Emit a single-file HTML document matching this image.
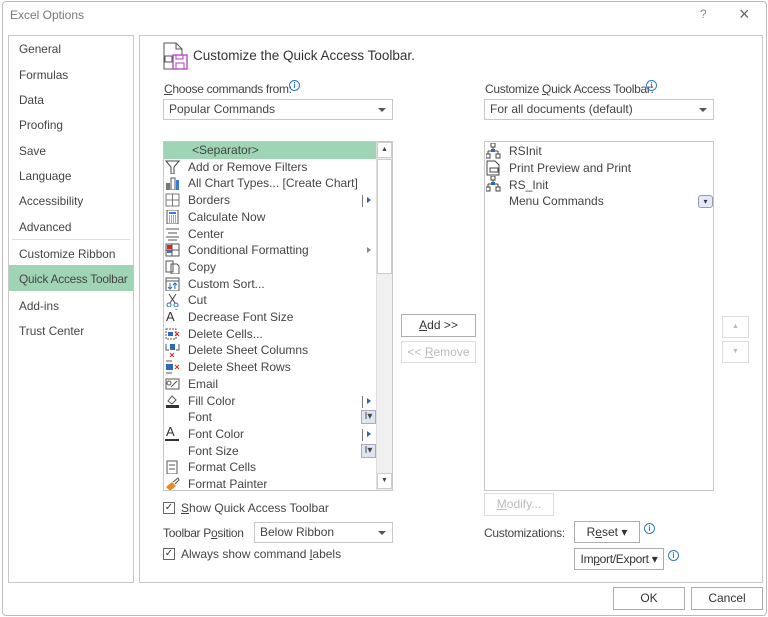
<!DOCTYPE html><html><head><style>
*{box-sizing:border-box;margin:0;padding:0}
body{width:768px;height:617px;background:#fff;font-family:"Liberation Sans",sans-serif;font-size:11.5px;color:#444;position:relative;overflow:hidden;white-space:nowrap}
.a{position:absolute;white-space:nowrap}
.box{position:absolute;border:1px solid #c8c8c8;background:#fff}
.nav div{position:absolute;left:10px;font-size:11.8px;white-space:nowrap}
.row{position:absolute;left:0;height:16.7px;line-height:16.7px;width:212px}
.row span{position:absolute;left:24px}
.ic{position:absolute;left:1px;top:1px;width:15px;height:14px}
.btn{position:absolute;border:1px solid #adadad;background:#fff;text-align:center;font-size:12px}
.dd{position:absolute;border:1px solid #c8c8c8;background:#fff;padding-left:5px;font-size:12px}
.dd:after{content:"";position:absolute;right:6px;top:8px;border-left:4px solid transparent;border-right:4px solid transparent;border-top:4px solid #555}
.cb{position:absolute;width:12px;height:12px;border:1px solid #666;font-size:10px;line-height:10px;text-align:center;color:#333}
.info{position:absolute;width:11px;height:11px;border:1.3px solid #2a78d0;border-radius:50%;color:#2a78d0;font-size:8px;line-height:9px;text-align:center;font-weight:bold}
.lab{letter-spacing:-0.3px}
</style></head><body>
<div class="a" style="left:2px;top:1px;width:765px;height:615px;border:1px solid #bbb;border-radius:4px"></div>
<div class="a" style="left:10px;top:8px;font-size:12px;color:#777">Excel Options</div>
<div class="a" style="left:700px;top:7px;font-size:12px;color:#888">?</div>
<div class="a" style="left:739px;top:4px;font-size:18px;color:#666">×</div>
<div class="box nav" style="left:8px;top:35px;width:126px;height:548px">
<div style="top:6px">General</div><div style="top:32px">Formulas</div><div style="top:57px">Data</div><div style="top:82px">Proofing</div><div style="top:108px">Save</div><div style="top:133px">Language</div><div style="top:158px">Accessibility</div><div style="top:184px">Advanced</div>
<div style="left:3px;top:203px;width:118px;height:1px;background:#ddd"></div>
<div style="top:211px">Customize Ribbon</div>
<div style="left:0;top:229px;width:124px;height:26px;background:#9fd5b5"></div>
<div style="top:236px;letter-spacing:-0.2px">Quick Access Toolbar</div>
<div style="top:263px">Add-ins</div><div style="top:288px">Trust Center</div>
</div>
<div class="box" style="left:139px;top:35px;width:624px;height:548px"></div>
<svg class="a" style="left:163px;top:42px" width="28" height="30"><path d="M1 1h12l6 6v20H1z M13 1v6h6" fill="none" stroke="#555"/><rect x="2" y="14" width="7" height="6" fill="#fff" stroke="#555"/><rect x="10" y="13" width="14" height="14" fill="#fff" stroke="#b040c0" stroke-width="1.3"/><rect x="13" y="13" width="7" height="4" fill="none" stroke="#b040c0"/><rect x="13" y="21" width="8" height="6" fill="none" stroke="#b040c0"/></svg>
<div class="a" style="left:193px;top:48px;font-size:13.5px;color:#333">Customize the Quick Access Toolbar.</div>
<div class="a lab" style="left:164px;top:82px;font-size:12px"><u>C</u>hoose commands from:</div>
<div class="info" style="left:289px;top:80px">i</div>
<div class="dd" style="left:163px;top:99px;width:230px;height:21px;line-height:19px">Popular Commands</div>
<div class="box" style="left:163px;top:141px;width:230px;height:350px;overflow:hidden">
<div style="position:absolute;left:0;top:0;width:212px;height:17px;background:#9fd5b5"></div>
<div style="position:absolute;left:212px;top:0;width:17px;height:348px;background:#f0f0f0;border-left:1px solid #ddd"></div>
<div style="position:absolute;left:213px;top:17px;width:15px;height:115px;background:#fff;border:1px solid #ccc"></div>
<div style="position:absolute;left:213px;top:0;width:15px;height:16px;background:#fff;border:1px solid #ccc;font-size:7px;text-align:center;line-height:14px">▲</div>
<div style="position:absolute;left:213px;top:331px;width:15px;height:16px;background:#fff;border:1px solid #ccc;font-size:7px;text-align:center;line-height:14px">▼</div>
<div style="position:relative;font-size:12px">
<div class="row" style="top:0"><span style="left:28px">&lt;Separator&gt;</span></div>
<div class="row" style="top:16.7px"><svg class="ic"><path d="M1 1h13L9 7v7H6V7z" fill="none" stroke="#444"/></svg><span>Add or Remove Filters</span></div>
<div class="row" style="top:33.4px"><svg class="ic"><rect x="1" y="7" width="4" height="7" fill="#777"/><rect x="6" y="2" width="4" height="12" fill="none" stroke="#555"/><rect x="11" y="4" width="3" height="10" fill="#3a7bd5"/></svg><span>All Chart Types... [Create Chart]</span></div>
<div class="row" style="top:50.1px"><svg class="ic"><rect x="1" y="1" width="13" height="12" fill="none" stroke="#777"/><path d="M7.5 1v12M1 7h13" stroke="#777"/></svg><span>Borders</span><i style="position:absolute;left:198px;top:3px;height:12px;border-left:1px solid #777"></i><i style="position:absolute;left:203px;top:5px;border-left:4px solid #3a5fa0;border-top:3px solid transparent;border-bottom:3px solid transparent"></i></div>
<div class="row" style="top:66.8px"><svg class="ic"><rect x="2" y="0" width="11" height="14" fill="none" stroke="#555"/><rect x="4" y="2" width="7" height="2" fill="#3a7bd5"/><path d="M4 6h7M4 8h7M4 10h7M4 12h7" stroke="#555" stroke-dasharray="1 1"/></svg><span>Calculate Now</span></div>
<div class="row" style="top:83.5px"><svg class="ic"><path d="M1 2h13M3 6h9M1 10h13M3 13h9" stroke="#555"/></svg><span>Center</span></div>
<div class="row" style="top:100.2px"><svg class="ic"><rect x="1" y="1" width="13" height="12" fill="none" stroke="#555"/><rect x="2" y="2" width="5" height="4" fill="#d22"/><rect x="2" y="7" width="5" height="3" fill="#3a7bd5"/><path d="M1 7h13M7 1v12" stroke="#555"/></svg><span>Conditional Formatting</span><i style="position:absolute;left:203px;top:5px;border-left:4px solid #888;border-top:3px solid transparent;border-bottom:3px solid transparent"></i></div>
<div class="row" style="top:116.9px"><svg class="ic"><path d="M1 1h7v11H1zM6 4h6l2 2v8H6z" fill="#fff" stroke="#555"/></svg><span>Copy</span></div>
<div class="row" style="top:133.6px"><svg class="ic"><rect x="1" y="1" width="13" height="13" fill="none" stroke="#555"/><path d="M1 4h13" stroke="#555"/><path d="M5 6v6M3 10l2 2 2-2M10 12V6M8 8l2-2 2 2" stroke="#2a6ac0" fill="none"/></svg><span>Custom Sort...</span></div>
<div class="row" style="top:150.3px"><svg class="ic"><path d="M4 1l6 9M11 1L5 10" stroke="#444"/><circle cx="4" cy="12" r="2" fill="none" stroke="#2a6ac0"/><circle cx="11" cy="12" r="2" fill="none" stroke="#2a6ac0"/></svg><span>Cut</span></div>
<div class="row" style="top:167px"><span style="left:2px;font-size:13px;color:#333">A</span><span style="left:11px;top:-4px;font-size:8px;color:#2a6ac0">ˇ</span><span>Decrease Font Size</span></div>
<div class="row" style="top:183.7px"><svg class="ic"><rect x="1" y="2" width="10" height="10" fill="none" stroke="#555" stroke-dasharray="2 1"/><rect x="3" y="5" width="5" height="4" fill="#2a6ac0"/><path d="M10 5l4 4M14 5l-4 4" stroke="#d22"/></svg><span>Delete Cells...</span></div>
<div class="row" style="top:200.4px"><svg class="ic"><path d="M1 1v6h3M14 1v6h-3" stroke="#555" fill="none"/><rect x="5" y="1" width="5" height="6" fill="#2a6ac0"/><path d="M5 10l4 4M9 10l-4 4" stroke="#d22"/></svg><span>Delete Sheet Columns</span></div>
<div class="row" style="top:217.1px"><svg class="ic"><path d="M1 1h6M1 13h6" stroke="#555"/><rect x="1" y="4" width="7" height="6" fill="#2a6ac0"/><path d="M10 5l4 4M14 5l-4 4" stroke="#d22"/></svg><span>Delete Sheet Rows</span></div>
<div class="row" style="top:233.8px"><svg class="ic"><rect x="1" y="2" width="13" height="10" fill="none" stroke="#555"/><path d="M6 10l6-6" stroke="#555"/><circle cx="4" cy="6" r="2" fill="none" stroke="#555"/></svg><span>Email</span></div>
<div class="row" style="top:250.5px"><svg class="ic"><path d="M3 7l4-5 4 4-4 4z" fill="none" stroke="#555"/><rect x="1" y="11" width="13" height="3" fill="#333"/></svg><span>Fill Color</span><i style="position:absolute;left:198px;top:3px;height:12px;border-left:1px solid #777"></i><i style="position:absolute;left:203px;top:5px;border-left:4px solid #3a5fa0;border-top:3px solid transparent;border-bottom:3px solid transparent"></i></div>
<div class="row" style="top:267.2px"><span>Font</span><i style="position:absolute;left:197px;top:1px;width:15px;height:14px;background:#dde6f0;border:1px solid #aab;font-style:normal;font-size:10px;line-height:12px;text-align:center">I▾</i></div>
<div class="row" style="top:283.9px"><span style="left:2px;font-size:13px;top:-2px;color:#333">A</span><i style="position:absolute;left:1px;top:13px;width:14px;height:2px;background:#333"></i><span>Font Color</span><i style="position:absolute;left:198px;top:3px;height:12px;border-left:1px solid #777"></i><i style="position:absolute;left:203px;top:5px;border-left:4px solid #3a5fa0;border-top:3px solid transparent;border-bottom:3px solid transparent"></i></div>
<div class="row" style="top:300.6px"><span>Font Size</span><i style="position:absolute;left:197px;top:1px;width:15px;height:14px;background:#dde6f0;border:1px solid #aab;font-style:normal;font-size:10px;line-height:12px;text-align:center">I▾</i></div>
<div class="row" style="top:317.3px"><svg class="ic"><rect x="2" y="1" width="10" height="13" fill="none" stroke="#555"/><path d="M4 5h6M4 9h6" stroke="#555"/></svg><span>Format Cells</span></div>
<div class="row" style="top:334px"><svg class="ic"><path d="M1 10l6-5 4 4-6 5z" fill="#e8892b"/><path d="M8 5l5-4 1 2-4 4" fill="none" stroke="#555"/></svg><span>Format Painter</span></div>
</div></div>
<div class="a lab" style="left:485px;top:82px;font-size:12px">Customize <u>Q</u>uick Access Toolbar:</div>
<div class="info" style="left:646px;top:80px">i</div>
<div class="dd" style="left:484px;top:99px;width:230px;height:21px;line-height:19px">For all documents (default)</div>
<div class="box" style="left:484px;top:141px;width:230px;height:350px;font-size:12px">
<svg class="a" style="left:1px;top:1px" width="16" height="16"><rect x="5" y="0" width="4" height="4" fill="none" stroke="#444"/><path d="M7 4v4M2 8h10M2 8v3M12 8v3" stroke="#444"/><rect x="0" y="11" width="4" height="4" fill="none" stroke="#444"/><rect x="10" y="11" width="4" height="4" fill="none" stroke="#444"/><rect x="5" y="6" width="4" height="3" fill="#2a6ac0"/></svg>
<div class="a" style="left:24px;top:2px">RSInit</div>
<svg class="a" style="left:1px;top:18px" width="16" height="16"><path d="M1 1h8l4 4v10H1z" fill="none" stroke="#444"/><rect x="4" y="8" width="8" height="4" fill="#fff" stroke="#444"/></svg>
<div class="a" style="left:24px;top:19px">Print Preview and Print</div>
<svg class="a" style="left:1px;top:34px" width="16" height="16"><rect x="5" y="0" width="4" height="4" fill="none" stroke="#444"/><path d="M7 4v4M2 8h10M2 8v3M12 8v3" stroke="#444"/><rect x="0" y="11" width="4" height="4" fill="none" stroke="#444"/><rect x="10" y="11" width="4" height="4" fill="none" stroke="#444"/><rect x="5" y="6" width="4" height="3" fill="#2a6ac0"/></svg>
<div class="a" style="left:24px;top:36px">RS_Init</div>
<div class="a" style="left:24px;top:52px">Menu Commands</div>
<div class="a" style="left:213px;top:53px;width:15px;height:13px;border:1px solid #99a;border-radius:3px;background:#e4eaf2;font-size:8px;text-align:center;line-height:12px;color:#336">▾</div>
</div>
<div class="btn" style="left:401px;top:314px;width:75px;height:23px;line-height:21px;color:#333"><u>A</u>dd &gt;&gt;</div>
<div class="btn" style="left:401px;top:341px;width:75px;height:22px;line-height:20px;color:#bbb;border-color:#ddd">&lt;&lt; <u>R</u>emove</div>
<div class="btn" style="left:722px;top:316px;width:27px;height:22px;border-color:#ddd;color:#bbb;font-size:7px;line-height:20px">▲</div>
<div class="btn" style="left:722px;top:341px;width:27px;height:22px;border-color:#ddd;color:#bbb;font-size:7px;line-height:20px">▼</div>
<div class="cb" style="left:163px;top:502px">✓</div>
<div class="a" style="left:181px;top:501px;font-size:12px"><u>S</u>how Quick Access Toolbar</div>
<div class="a lab" style="left:163px;top:526px;font-size:12px">Toolbar P<u>o</u>sition</div>
<div class="dd" style="left:254px;top:522px;width:139px;height:21px;line-height:19px">Below Ribbon</div>
<div class="cb" style="left:163px;top:548px">✓</div>
<div class="a" style="left:181px;top:547px;font-size:12px">Always show command <u>l</u>abels</div>
<div class="btn" style="left:484px;top:493px;width:70px;height:23px;line-height:21px;color:#bbb;border-color:#ddd"><u>M</u>odify...</div>
<div class="a lab" style="left:484px;top:526px;font-size:12px">Customizations:</div>
<div class="btn" style="left:574px;top:521px;width:66px;height:22px;line-height:20px;color:#333">R<u>e</u>set ▾</div>
<div class="info" style="left:644px;top:523px">i</div>
<div class="btn lab" style="left:574px;top:548px;width:90px;height:22px;line-height:20px;color:#333">Im<u>p</u>ort/Export ▾</div>
<div class="info" style="left:668px;top:550px">i</div>
<div class="btn" style="left:613px;top:587px;width:72px;height:23px;line-height:21px;color:#333">OK</div>
<div class="btn" style="left:691px;top:587px;width:72px;height:23px;line-height:21px;color:#333">Cancel</div>
</body></html>
